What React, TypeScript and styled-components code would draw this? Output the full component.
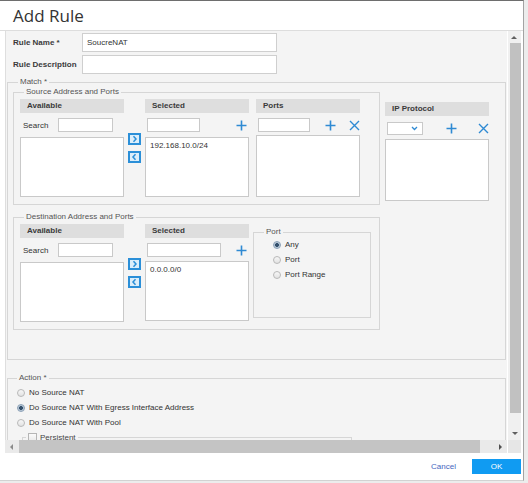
import React from 'react'
import styled, { createGlobalStyle } from 'styled-components'

const GlobalStyle = createGlobalStyle`
  html, body {
    margin: 0;
    padding: 0;
    background: #ececec;
  }
  body {
    font-family: "Liberation Sans", Arial, sans-serif;
    font-size: 8px;
    color: #333;
  }
  * {
    box-sizing: border-box;
  }
`

const BLUE = '#2f8ad3'

const Dialog = styled.div`
  width: 524px;
  background: #fff;
  border-top: 1px solid #6e6e6e;
  border-right: 1px solid #a3a3a3;
  border-bottom: 1px solid #d2d2d2;
  display: flex;
  flex-direction: column;
`

const Header = styled.div`
  height: 30px;
  border-bottom: 1px solid #dddddd;
  padding-left: 13px;
`

const Title = styled.h1`
  margin: 0;
  font-family: "Open Sans", "Liberation Sans", sans-serif;
  font-weight: 400;
  font-size: 17px;
  line-height: 29px;
  color: #333;
`

const Body = styled.div`
  display: grid;
  grid-template-columns: 502px 13px;
  grid-template-rows: 409px 13px;
  column-gap: 1px;
  padding-left: 5px;
`

const Content = styled.div`
  background: #f4f4f4;
  border-left: 1px solid #dedede;
  overflow: hidden;
  padding: 2px 0 0 1px;
`

const FormGrid = styled.div`
  display: grid;
  grid-template-columns: 69px 195px;
  row-gap: 3px;
  align-items: center;
  margin-left: 6px;
`

const FieldLabel = styled.label`
  font-weight: 700;
  font-size: 8px;
  color: #3a3a3a;
`

const FieldInput = styled.div`
  height: 19px;
  border: 1px solid #cfcfcf;
  background: #fff;
  padding-left: 4px;
  font-size: 8px;
  line-height: 17px;
  color: #333;
`

const Legend = styled.legend<{ $indent: number }>`
  height: 10px;
  line-height: 10px;
  font-size: 8px;
  color: #555;
  padding: 0 2px;
  margin-left: ${(p) => p.$indent}px;
`

const MatchSet = styled.fieldset`
  margin: 3px 0 0 0;
  width: 499px;
  min-width: 0;
  border: 1px solid #d6d6d6;
  padding: 0 0 29px 5px;
`

const MatchRow = styled.div`
  display: flex;
  align-items: flex-start;
  gap: 5px;
`

const LeftColumn = styled.div`
  display: flex;
  flex-direction: column;
  gap: 7px;
  width: 367px;
`

const PanelSet = styled.fieldset`
  margin: 0;
  min-width: 0;
  width: 367px;
  border: 1px solid #d6d6d6;
  padding: 2px 0 7px 6px;
`

const PanelRow = styled.div`
  display: flex;
  align-items: flex-start;
  gap: 4px;
`

const ListColumn = styled.div<{ $shift?: number; $top?: number }>`
  display: flex;
  flex-direction: column;
  width: 104px;
  margin-left: ${(p) => p.$shift ?? 0}px;
  margin-top: ${(p) => p.$top ?? 0}px;
`

const ColHeader = styled.div`
  height: 14px;
  background: #dedede;
  font-weight: 700;
  font-size: 8px;
  line-height: 14px;
  padding-left: 7px;
  color: #3a3a3a;
`

const ToolRow = styled.div`
  display: flex;
  align-items: center;
  height: 14px;
  margin-top: 5px;
`

const SearchLabel = styled.span`
  width: 33px;
  margin-left: 3px;
  font-size: 8px;
  color: #333;
`

const TextBox = styled.div<{ $w: number }>`
  width: ${(p) => p.$w}px;
  height: 14px;
  margin-left: 2px;
  border: 1px solid #c9c9c9;
  background: #fff;
`

const SelectBox = styled.div`
  width: 36px;
  height: 13px;
  margin-left: 2px;
  border: 1px solid #c9c9c9;
  background: #fff;
  display: flex;
  align-items: center;
  justify-content: flex-end;
  padding-right: 4px;
`

const ListBox = styled.div<{ $h: number; $gap: number }>`
  height: ${(p) => p.$h}px;
  margin-top: ${(p) => p.$gap}px;
  border: 1px solid #c9c9c9;
  background: #fff;
  padding: 3px 4px;
  font-size: 8px;
  color: #333;
`

const ArrowColumn = styled.div`
  display: flex;
  flex-direction: column;
  gap: 6px;
  padding-top: 34px;
`

const ArrowBtn = styled.div`
  width: 13px;
  height: 12px;
  border: 2px solid #2b8fd8;
  background: #dceefa;
  display: flex;
  align-items: center;
  justify-content: center;
`

const IconSvg = styled.svg<{ $gap: number }>`
  display: block;
  flex: none;
  margin-left: ${(p) => p.$gap}px;
`

const PortSet = styled.fieldset`
  margin: 3px 0 0 0;
  min-width: 0;
  width: 118px;
  height: 91px;
  border: 1px solid #d6d6d6;
  padding: 0 0 0 10px;
`

const RadioList = styled.div<{ $indent: number }>`
  display: flex;
  flex-direction: column;
  padding-left: ${(p) => p.$indent}px;
`

const RadioRow = styled.div`
  display: flex;
  align-items: center;
  height: 15px;
  gap: 4px;
  font-size: 8px;
  color: #333;
`

const RadioDot = styled.span<{ $on?: boolean }>`
  width: 8px;
  height: 8px;
  border-radius: 50%;
  border: 1px solid ${(p) => (p.$on ? '#8aa0b6' : '#b9b9b9')};
  background: ${(p) =>
    p.$on
      ? 'radial-gradient(circle, #34506c 0 1.6px, #aebfd0 2.2px, #dfe7ef 100%)'
      : 'linear-gradient(#f7f7f7, #e2e2e2)'};
  flex: none;
`

const ActionSet = styled.fieldset`
  margin: 13px 0 0 0;
  width: 499px;
  min-width: 0;
  border: 1px solid #d6d6d6;
  padding: 2px 0 0 9px;
`

const PoolSet = styled.fieldset`
  margin: 1px 0 0 5px;
  width: 330px;
  min-width: 0;
  border: 1px solid #d6d6d6;
  padding: 0;
  height: 30px;
`

const CheckLegend = styled.legend`
  height: 12px;
  display: flex;
  align-items: center;
  gap: 3px;
  padding: 0 2px;
  margin-left: 3px;
  font-size: 8px;
  color: #444;
`

const CheckBox = styled.span`
  width: 9px;
  height: 9px;
  border: 1px solid #b5b5b5;
  background: linear-gradient(#fbfbfb, #e9e9e9);
`

const VScroll = styled.div`
  display: flex;
  flex-direction: column;
  background: #f0f0f0;
`

const HScroll = styled.div`
  display: flex;
  align-items: stretch;
  background: #eaeaea;
`

const ScrollBtn = styled.div<{ $size: number }>`
  flex: none;
  width: ${(p) => p.$size}px;
  height: ${(p) => p.$size}px;
  display: flex;
  align-items: center;
  justify-content: center;
`

const Tri = styled.span<{ $dir: 'up' | 'down' | 'left' | 'right' }>`
  width: 0;
  height: 0;
  border: 3px solid transparent;
  ${(p) =>
    p.$dir === 'up'
      ? 'border-bottom-color: #606060; border-top-width: 0;'
      : p.$dir === 'down'
      ? 'border-top-color: #606060; border-bottom-width: 0;'
      : p.$dir === 'left'
      ? 'border-right-color: #8a8a8a; border-left-width: 0;'
      : 'border-left-color: #505050; border-right-width: 0;'}
`

const VThumb = styled.div`
  height: 370px;
  margin-left: 2px;
  background: #c1c1c1;
`

const HThumb = styled.div`
  width: 461px;
  margin: 0 0 0 1px;
  background: #c4c4c4;
`

const Spacer = styled.div`
  flex: 1;
`

const Corner = styled.div`
  background: #e6e6e6;
`

const Footer = styled.div`
  height: 27px;
  display: flex;
  align-items: center;
  justify-content: flex-end;
  padding-right: 2px;
  background: #fff;
`

const CancelLink = styled.span`
  font-size: 8px;
  color: #4466c0;
  margin-right: 16px;
`

const OkButton = styled.div`
  width: 49px;
  height: 15px;
  background: #109bf2;
  color: #fff;
  font-size: 8px;
  line-height: 15px;
  text-align: center;
`

const Plus = ({ gap }: { gap: number }) => (
  <IconSvg $gap={gap} width="11" height="11" viewBox="0 0 11 11">
    <path d="M5.5 0.5v10M0.5 5.5h10" stroke={BLUE} strokeWidth="1.6" fill="none" />
  </IconSvg>
)

const Cross = ({ gap }: { gap: number }) => (
  <IconSvg $gap={gap} width="11" height="11" viewBox="0 0 11 11">
    <path d="M1 1l9 9M10 1l-9 9" stroke={BLUE} strokeWidth="1.4" fill="none" />
  </IconSvg>
)

const Chevron = ({ left }: { left?: boolean }) => (
  <svg width="9" height="8" viewBox="0 0 9 8">
    <polyline
      points={left ? '5.5,1.2 3,4 5.5,6.8' : '3.5,1.2 6,4 3.5,6.8'}
      stroke="#2b8fd8"
      strokeWidth="1.5"
      fill="none"
    />
  </svg>
)

const MoveButtons = () => (
  <ArrowColumn>
    <ArrowBtn>
      <Chevron />
    </ArrowBtn>
    <ArrowBtn>
      <Chevron left />
    </ArrowBtn>
  </ArrowColumn>
)

const AvailableList = () => (
  <ListColumn>
    <ColHeader>Available</ColHeader>
    <ToolRow>
      <SearchLabel>Search</SearchLabel>
      <TextBox $w={55} />
    </ToolRow>
    <ListBox $h={60} $gap={5} />
  </ListColumn>
)

export default function App() {
  return (
    <>
      <GlobalStyle />
      <Dialog>
        <Header>
          <Title>Add Rule</Title>
        </Header>
        <Body>
          <Content>
            <FormGrid>
              <FieldLabel>Rule Name *</FieldLabel>
              <FieldInput>SoucreNAT</FieldInput>
              <FieldLabel>Rule Description</FieldLabel>
              <FieldInput />
            </FormGrid>

            <MatchSet>
              <Legend $indent={5}>Match *</Legend>
              <MatchRow>
                <LeftColumn>
                  <PanelSet>
                    <Legend $indent={4}>Source Address and Ports</Legend>
                    <PanelRow>
                      <AvailableList />
                      <MoveButtons />
                      <ListColumn>
                        <ColHeader>Selected</ColHeader>
                        <ToolRow>
                          <TextBox $w={53} />
                          <Plus gap={36} />
                        </ToolRow>
                        <ListBox $h={60} $gap={5}>192.168.10.0/24</ListBox>
                      </ListColumn>
                      <ListColumn $shift={3}>
                        <ColHeader>Ports</ColHeader>
                        <ToolRow>
                          <TextBox $w={52} />
                          <Plus gap={15} />
                          <Cross gap={13} />
                        </ToolRow>
                        <ListBox $h={62} $gap={3} />
                      </ListColumn>
                    </PanelRow>
                  </PanelSet>

                  <PanelSet>
                    <Legend $indent={4}>Destination Address and Ports</Legend>
                    <PanelRow>
                      <AvailableList />
                      <MoveButtons />
                      <ListColumn>
                        <ColHeader>Selected</ColHeader>
                        <ToolRow>
                          <TextBox $w={74} />
                          <Plus gap={15} />
                        </ToolRow>
                        <ListBox $h={60} $gap={4}>0.0.0.0/0</ListBox>
                      </ListColumn>
                      <PortSet>
                        <Legend $indent={0}>Port</Legend>
                        <RadioList $indent={9}>
                          <RadioRow>
                            <RadioDot $on />
                            Any
                          </RadioRow>
                          <RadioRow>
                            <RadioDot />
                            Port
                          </RadioRow>
                          <RadioRow>
                            <RadioDot />
                            Port Range
                          </RadioRow>
                        </RadioList>
                      </PortSet>
                    </PanelRow>
                  </PanelSet>
                </LeftColumn>

                <ListColumn $top={15}>
                  <ColHeader>IP Protocol</ColHeader>
                  <ToolRow>
                    <SelectBox>
                      <svg width="7" height="5" viewBox="0 0 7 5">
                        <polyline points="1,1 3.5,3.5 6,1" stroke={BLUE} strokeWidth="1.3" fill="none" />
                      </svg>
                    </SelectBox>
                    <Plus gap={23} />
                    <Cross gap={21} />
                  </ToolRow>
                  <ListBox $h={62} $gap={4} />
                </ListColumn>
              </MatchRow>
            </MatchSet>

            <ActionSet>
              <Legend $indent={0}>Action *</Legend>
              <RadioList $indent={0}>
                <RadioRow>
                  <RadioDot />
                  No Source NAT
                </RadioRow>
                <RadioRow>
                  <RadioDot $on />
                  Do Source NAT With Egress Interface Address
                </RadioRow>
                <RadioRow>
                  <RadioDot />
                  Do Source NAT With Pool
                </RadioRow>
              </RadioList>
              <PoolSet>
                <CheckLegend>
                  <CheckBox />
                  Persistent
                </CheckLegend>
              </PoolSet>
            </ActionSet>
          </Content>

          <VScroll>
            <ScrollBtn $size={12}>
              <Tri $dir="up" />
            </ScrollBtn>
            <VThumb />
            <Spacer />
            <ScrollBtn $size={13}>
              <Tri $dir="down" />
            </ScrollBtn>
          </VScroll>

          <HScroll>
            <ScrollBtn $size={13}>
              <Tri $dir="left" />
            </ScrollBtn>
            <HThumb />
            <Spacer />
            <ScrollBtn $size={13}>
              <Tri $dir="right" />
            </ScrollBtn>
          </HScroll>
          <Corner />
        </Body>
        <Footer>
          <CancelLink>Cancel</CancelLink>
          <OkButton>OK</OkButton>
        </Footer>
      </Dialog>
    </>
  )
}
